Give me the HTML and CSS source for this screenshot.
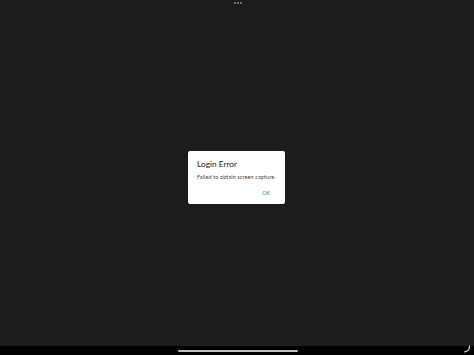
FILE: index.html
```html
<!DOCTYPE html>
<html lang="en">
<head>
  <meta charset="UTF-8" />
  <title>Login Error</title>
  <link rel="stylesheet" href="styles.css">
</head>
<body>
  <div class="screen">
    <div class="top-dots"><span></span><span></span><span></span></div>
    <div class="stage">
      <div class="dialog">
        <div class="dialog-title">Login Error</div>
        <div class="dialog-msg">Failed to obtain screen capture.</div>
        <div class="dialog-actions"><span class="dialog-btn">OK</span></div>
      </div>
    </div>
    <div class="bottom-bar">
      <div class="home-indicator"></div>
      <svg class="corner-icon" width="8" height="8" viewBox="0 0 8 8">
        <path d="M6.5 1 C6.8 4 5 6.5 1.5 6.8" fill="none" stroke="#cfcfcf" stroke-width="1.3" stroke-linecap="round"/>
      </svg>
    </div>
  </div>
</body>
</html>
```
FILE: styles.css
```css
html, body {
  margin: 0;
  padding: 0;
  background-color: #1c1c1c;
  font-family: "Open Sans", "Liberation Sans", sans-serif;
}
.screen {
  width: 474px;
  height: 355px;
  display: flex;
  flex-direction: column;
}
.top-dots {
  height: 6px;
  display: flex;
  justify-content: center;
  align-items: center;
  gap: 1px;
  padding-left: 1px;
}
.top-dots span {
  width: 2px;
  height: 2px;
  border-radius: 1px;
  background-color: #8a8a8a;
}
.stage {
  flex: 1;
  display: flex;
  justify-content: center;
  padding-top: 145px;
  padding-right: 1px;
}
.dialog {
  width: 97px;
  height: 53px;
  box-sizing: border-box;
  background-color: #ffffff;
  border-radius: 2px;
  padding: 7px 8px 0 9px;
  white-space: nowrap;
}
.dialog-title {
  font-family: Lato, "Open Sans", sans-serif;
  font-size: 8.3px;
  color: #222222;
  line-height: 12px;
}
.dialog-msg {
  font-family: Lato, "Open Sans", sans-serif;
  font-size: 5.5px;
  color: #444444;
  line-height: 8px;
  margin-top: 3px;
  letter-spacing: 0.1px;
}
.dialog-actions {
  display: flex;
  justify-content: flex-end;
  margin-top: 8px;
}
.dialog-btn {
  font-family: Lato, "Open Sans", sans-serif;
  font-size: 5.3px;
  color: #2f7de1;
  line-height: 8px;
  padding-right: 7px;
}
.bottom-bar {
  height: 9px;
  background-color: #000000;
  position: relative;
  display: flex;
  justify-content: center;
  padding-left: 1px;
}
.home-indicator {
  width: 120px;
  height: 2px;
  margin-top: 4px;
  border-radius: 1px;
  background-color: #bdbdbd;
}
.corner-icon {
  position: absolute;
  right: 3px;
  bottom: 2px;
}
```
